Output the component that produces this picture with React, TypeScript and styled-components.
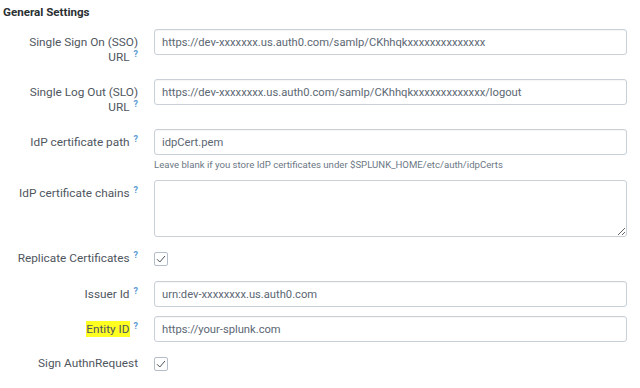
import styled, { createGlobalStyle } from 'styled-components';

const GlobalStyle = createGlobalStyle`
  html, body {
    margin: 0;
    padding: 0;
    background: #ffffff;
  }
  body {
    font-family: Roboto, "Liberation Sans", Arial, sans-serif;
    color: #3c444d;
  }
`;

type Field = {
  label: string[];
  kind: 'input' | 'textarea' | 'checkbox';
  value?: string;
  help?: string;
  tip?: boolean;
  highlight?: boolean;
};

const fields: Field[] = [
  {
    label: ['Single Sign On (SSO)', 'URL'],
    kind: 'input',
    value: 'https://dev-xxxxxxx.us.auth0.com/samlp/CKhhqkxxxxxxxxxxxxxx',
    tip: true,
  },
  {
    label: ['Single Log Out (SLO)', 'URL'],
    kind: 'input',
    value: 'https://dev-xxxxxxxx.us.auth0.com/samlp/CKhhqkxxxxxxxxxxxxx/logout',
    tip: true,
  },
  {
    label: ['IdP certificate path'],
    kind: 'input',
    value: 'idpCert.pem',
    help: 'Leave blank if you store IdP certificates under $SPLUNK_HOME/etc/auth/idpCerts',
    tip: true,
  },
  { label: ['IdP certificate chains'], kind: 'textarea', tip: true },
  { label: ['Replicate Certificates'], kind: 'checkbox', tip: true },
  { label: ['Issuer Id'], kind: 'input', value: 'urn:dev-xxxxxxxx.us.auth0.com', tip: true },
  { label: ['Entity ID'], kind: 'input', value: 'https://your-splunk.com', tip: true, highlight: true },
  { label: ['Sign AuthnRequest'], kind: 'checkbox' },
];

const App = () => {
  return (
    <>
      <GlobalStyle />
      <Page>
        <Heading>General Settings</Heading>
        {fields.map((f) => (
          <Row key={f.label.join(' ')}>
            <Label $checkbox={f.kind === 'checkbox'}>
              {f.label.map((line, i) => (
                <LabelLine key={line}>
                  <LabelText $highlight={!!f.highlight}>{line}</LabelText>
                  {f.tip && i === f.label.length - 1 && <Tip>?</Tip>}
                </LabelLine>
              ))}
            </Label>
            <Control $checkbox={f.kind === 'checkbox'}>
              {f.kind === 'input' && <TextInput readOnly value={f.value} />}
              {f.kind === 'textarea' && <TextArea readOnly value="" />}
              {f.kind === 'checkbox' && (
                <CheckBox>
                  <svg width="10" height="8" viewBox="0 0 10 8">
                    <path d="M1 4.2 L3.8 7 L9 1" fill="none" stroke="#4a525a" strokeWidth="1" />
                  </svg>
                </CheckBox>
              )}
              {f.help && <Help>{f.help}</Help>}
            </Control>
          </Row>
        ))}
      </Page>
    </>
  );
};

export default App;

const Page = styled.div`
  width: 640px;
  padding: 6px 0 0 0;
  box-sizing: border-box;
`;

const Heading = styled.div`
  font-weight: 700;
  font-size: 11.6px;
  line-height: 13px;
  color: #2b3033;
  padding-left: 3px;
  margin-bottom: 10px;
`;

const Row = styled.div`
  display: grid;
  grid-template-columns: 138px 473px;
  column-gap: 16px;
  margin-bottom: 9px;
`;

const Label = styled.div<{ $checkbox: boolean }>`
  text-align: right;
  font-size: 11.8px;
  line-height: 15px;
  padding: ${(p) => (p.$checkbox ? '5px 0 6px' : '6px 0 5px')};
  color: #4f565e;
  white-space: nowrap;
`;

const LabelLine = styled.div`
  display: block;
`;

const LabelText = styled.span<{ $highlight: boolean }>`
  background: ${(p) => (p.$highlight ? '#ffff22' : 'transparent')};
  padding: ${(p) => (p.$highlight ? '1px 0' : '0')};
`;

const Tip = styled.span`
  display: inline-block;
  color: #5a9bd3;
  font-size: 9px;
  font-weight: 700;
  margin-left: 4px;
  line-height: 9px;
  vertical-align: top;
`;

const Control = styled.div<{ $checkbox: boolean }>`
  display: flex;
  flex-direction: column;
  justify-content: ${(p) => (p.$checkbox ? 'center' : 'flex-start')};
  min-height: 26px;
`;

const TextInput = styled.input`
  box-sizing: border-box;
  width: 100%;
  height: 26px;
  border: 1px solid #c9d0d8;
  border-radius: 3px;
  box-shadow: inset 0 1px 1px rgba(0, 0, 0, 0.04);
  padding: 0 7px;
  font-family: Roboto, "Liberation Sans", Arial, sans-serif;
  font-size: 11.2px;
  color: #5c6773;
  outline: none;
  background: #fff;
`;

const TextArea = styled.textarea`
  box-sizing: border-box;
  width: 100%;
  height: 57px;
  border: 1px solid #c9d0d8;
  border-radius: 3px;
  padding: 6px 7px;
  font-family: Roboto, "Liberation Sans", Arial, sans-serif;
  font-size: 11.2px;
  color: #5c6773;
  outline: none;
  display: block;
  margin: 0;
`;

const Help = styled.div`
  font-size: 9.6px;
  line-height: 12px;
  color: #6b7785;
  margin-top: 4px;
`;

const CheckBox = styled.div`
  box-sizing: border-box;
  width: 14px;
  height: 14px;
  border: 1px solid #b5bec8;
  border-radius: 2px;
  display: flex;
  align-items: center;
  justify-content: center;
  background: #fff;
`;
